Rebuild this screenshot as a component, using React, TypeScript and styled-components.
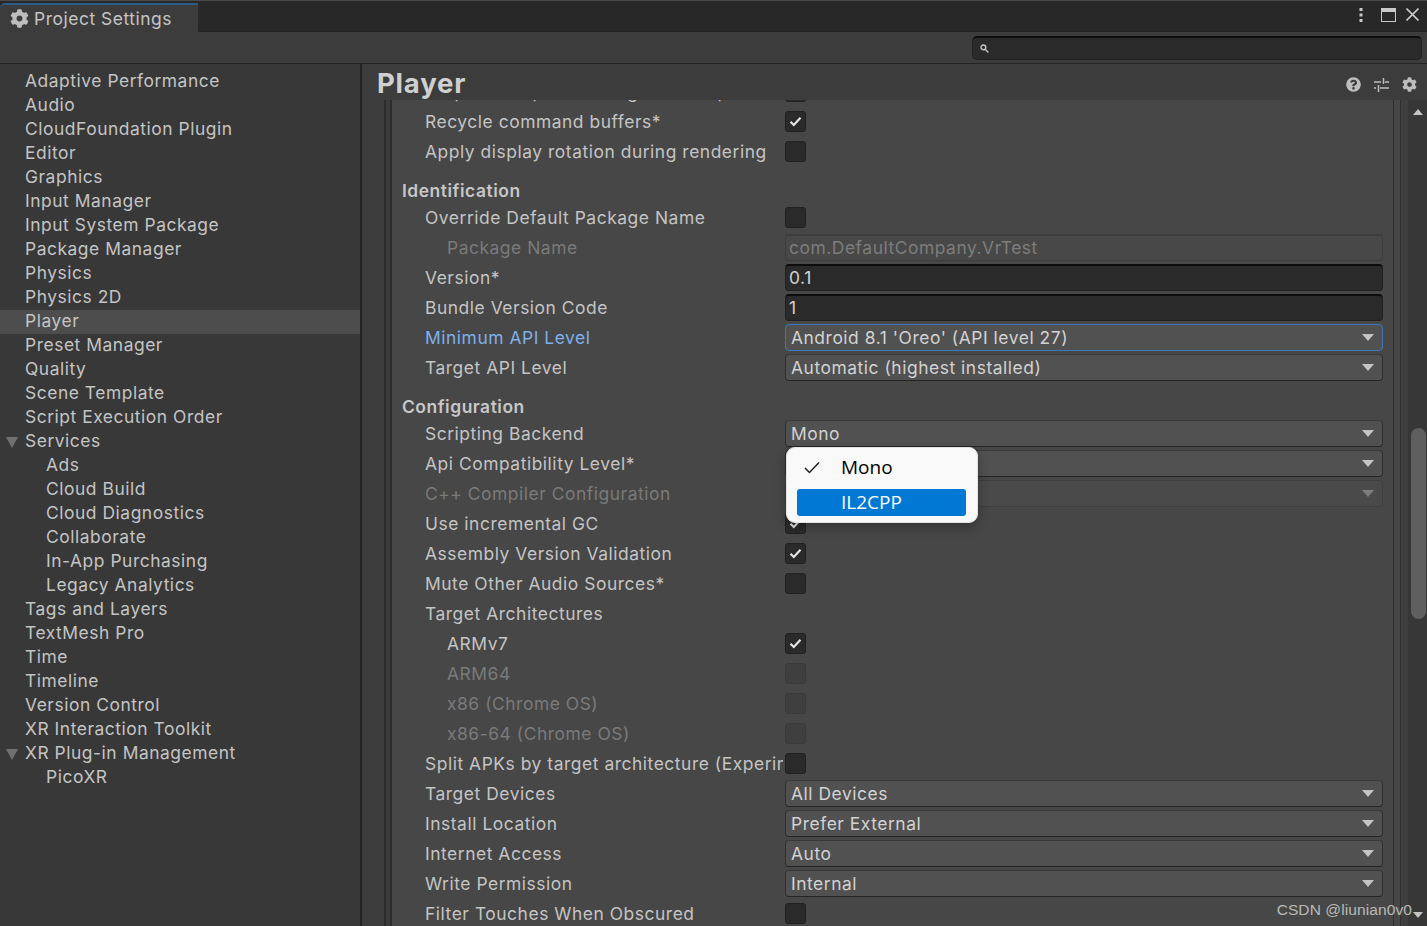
import React from "react";
import styled, { createGlobalStyle } from "styled-components";
import { FaCog, FaQuestionCircle } from "react-icons/fa";

const Global = createGlobalStyle`
  html, body { margin: 0; padding: 0; height: 100%; background: #3c3c3c; overflow: hidden; }
  #root { height: 100%; }
`;

const Window = styled.div`
  position: relative;
  width: 1427px;
  height: 926px;
  display: flex;
  flex-direction: column;
  overflow: hidden;
  background: #3c3c3c;
  color: #c4c4c4;
  font-family: Inter, "Noto Sans", sans-serif;
  font-size: 17.4px;
  letter-spacing: 0.55px;
`;

const TabBar = styled.div`
  height: 32px;
  flex: none;
  display: flex;
  align-items: stretch;
  justify-content: space-between;
  background: #282828;
  border-top: 1px solid #4a4a4a;
  box-sizing: border-box;
  border-bottom: 1px solid #232323;
`;

const Tab = styled.div`
  width: 198px;
  display: flex;
  align-items: center;
  gap: 5px;
  padding: 0 0 1px 10px;
  box-sizing: border-box;
  background: #3c3c3c;
  border-top: 2px solid #2c5d87;
  border-top-left-radius: 5px;
  margin-top: 2px;
  margin-bottom: -1px;
  color: #c4c4c4;
  svg { width: 19px; height: 19px; color: #bdbdbd; }
`;

const WindowControls = styled.div`
  display: flex;
  align-items: center;
  gap: 10px;
  padding: 0 8px 3px 0;
  color: #c8c8c8;
`;

const MaximizeIcon = styled.svg`
  margin-left: 8px;
`;

const SearchRow = styled.div`
  height: 32px;
  flex: none;
  box-sizing: border-box;
  display: flex;
  justify-content: flex-end;
  align-items: flex-start;
  padding: 4px 5px 0 0;
  border-bottom: 1px solid #232323;
`;

const SearchField = styled.div`
  width: 450px;
  height: 24px;
  box-sizing: border-box;
  display: flex;
  align-items: center;
  padding-left: 7px;
  background: #2a2a2a;
  border: 1px solid #212121;
  border-top: 2px solid #0d0d0d;
  border-radius: 5px;
`;

const Body = styled.div`
  flex: 1;
  min-height: 0;
  display: flex;
`;

const Sidebar = styled.nav`
  width: 360px;
  flex: none;
  padding-top: 6px;
  background: #383838;
  border-right: 2px solid #232323;
`;

const NavItem = styled.div<{ $active?: boolean; $level?: number }>`
  position: relative;
  height: 24px;
  line-height: 21px;
  padding-left: ${(p) => (p.$level ? 46 : 25)}px;
  background: ${(p) => (p.$active ? "#4d4d4d" : "transparent")};
  white-space: nowrap;
`;

const Caret = styled.span`
  position: absolute;
  left: 6px;
  top: 7px;
  width: 0;
  height: 0;
  border-left: 6px solid transparent;
  border-right: 6px solid transparent;
  border-top: 11px solid #707070;
`;

const Main = styled.main`
  flex: 1;
  min-width: 0;
  display: flex;
  flex-direction: column;
`;

const Header = styled.header`
  position: relative;
  z-index: 1;
  height: 36px;
  flex: none;
  display: flex;
  align-items: center;
  justify-content: space-between;
  padding: 0 10px 0 15px;
  background: #3c3c3c;
`;

const Title = styled.h1`
  margin: 1px 0 0;
  font-size: 27.5px;
  font-weight: 700;
  line-height: 36px;
  letter-spacing: 0.8px;
  color: #cfcfcf;
`;

const HeaderIcons = styled.div`
  display: flex;
  align-items: center;
  gap: 13px;
  padding-top: 5px;
  color: #bdbdbd;
  svg { width: 15px; height: 15px; display: block; }
`;

const Inspector = styled.div`
  flex: 1;
  min-height: 0;
  display: flex;
  overflow: hidden;
`;

const Gutter = styled.div`
  flex: none;
  box-sizing: border-box;
  margin-left: 22px;
  width: 8px;
  border-left: 2px solid #2c2c2c;
  border-right: 2px solid #2c2c2c;
  background: #3c3c3c;
`;

const Panel = styled.div`
  flex: 1;
  min-width: 0;
  background: #474747;
  overflow: hidden;
  padding-right: 6px;
  border-right: 1px solid #2f2f2f;
`;

const PanelScroll = styled.div`
  margin-top: -24px;
  padding: 0 10px;
  height: 900px;
  border-right: 1px solid #2f2f2f;
`;

const RightGutter = styled.div`
  width: 7px;
  flex: none;
  background: #3f3f3f;
`;

const Scrollbar = styled.div`
  position: relative;
  width: 19px;
  flex: none;
  background: #373737;
`;

const ScrollThumb = styled.div`
  position: absolute;
  left: 3px;
  top: 328px;
  width: 15px;
  height: 191px;
  border-radius: 8px;
  background: #5f5f5f;
`;

const ScrollArrow = styled.div<{ $down?: boolean }>`
  position: absolute;
  left: 5px;
  ${(p) => (p.$down ? "bottom: 8px;" : "top: 9px;")}
  width: 0;
  height: 0;
  border-left: 5px solid transparent;
  border-right: 5px solid transparent;
  ${(p) => (p.$down ? "border-top: 6px solid #c4c4c4;" : "border-bottom: 6px solid #c4c4c4;")}
`;

const Section = styled.div`
  height: 26px;
  line-height: 30px;
  margin-top: 10px;
  font-weight: 600;
  color: #c8c8c8;
`;

const Row = styled.div`
  height: 30px;
  display: flex;
  align-items: center;
`;

const Label = styled.div<{ $indent?: boolean; $blue?: boolean; $dim?: boolean }>`
  width: ${(p) => (p.$indent ? 336 : 358)}px;
  margin-left: ${(p) => (p.$indent ? 45 : 23)}px;
  margin-right: 2px;
  flex: none;
  overflow: hidden;
  white-space: nowrap;
  color: ${(p) => (p.$blue ? "#7eb0ea" : p.$dim ? "#7a7a7a" : "#c4c4c4")};
`;

const Check = styled.div<{ $dim?: boolean }>`
  width: 21px;
  height: 21px;
  box-sizing: border-box;
  display: flex;
  align-items: center;
  justify-content: center;
  border-radius: 3px;
  background: ${(p) => (p.$dim ? "#3f3f3f" : "#2a2a2a")};
  border: 1px solid ${(p) => (p.$dim ? "#3a3a3a" : "#212121")};
`;

const Input = styled.div<{ $dim?: boolean }>`
  flex: 1;
  height: 27px;
  line-height: 24px;
  box-sizing: border-box;
  padding-left: 3px;
  border-radius: 4px;
  white-space: nowrap;
  color: ${(p) => (p.$dim ? "#7d7d7d" : "#d2d2d2")};
  background: ${(p) => (p.$dim ? "#484848" : "#2a2a2a")};
  border: 1px solid ${(p) => (p.$dim ? "#3d3d3d" : "#212121")};
  border-top: 2px solid ${(p) => (p.$dim ? "#3d3d3d" : "#0d0d0d")};
`;

const Dropdown = styled.div<{ $focus?: boolean; $dim?: boolean }>`
  flex: 1;
  height: 27px;
  box-sizing: border-box;
  display: flex;
  align-items: center;
  justify-content: space-between;
  padding: 0 8px 0 5px;
  border-radius: 4px;
  white-space: nowrap;
  color: ${(p) => (p.$dim ? "#7d7d7d" : "#d2d2d2")};
  background: ${(p) => (p.$dim ? "#4a4a4a" : "#515151")};
  border: 1px solid ${(p) => (p.$focus ? "#3a79bb" : p.$dim ? "#3f3f3f" : "#303030")};
  ${(p) => (p.$focus || p.$dim ? "" : "border-bottom-color: #242424; border-top-color: #383838;")}
`;

const Arrow = styled.span<{ $dim?: boolean }>`
  width: 0;
  height: 0;
  border-left: 6px solid transparent;
  border-right: 6px solid transparent;
  border-top: 7px solid ${(p) => (p.$dim ? "#7d7d7d" : "#c4c4c4")};
`;

const Popup = styled.div`
  position: absolute;
  left: 786px;
  top: 447px;
  width: 192px;
  height: 76px;
  box-sizing: border-box;
  padding: 3px 11px 0 10px;
  background: #f9f9f9;
  border: 1px solid #e2e2e2;
  border-radius: 9px;
  box-shadow: 0 4px 12px rgba(0, 0, 0, 0.3);
  color: #000;
  font-family: "Open Sans", "Noto Sans", sans-serif;
  font-size: 19px;
  letter-spacing: 0;
  z-index: 3;
`;

const PopupItem = styled.div<{ $selected?: boolean }>`
  position: relative;
  height: ${(p) => (p.$selected ? 27 : 35)}px;
  margin-bottom: 3px;
  display: flex;
  align-items: center;
  padding: 0 0 ${(p) => (p.$selected ? 2 : 3)}px 44px;
  box-sizing: border-box;
  border-radius: 3px;
  background: ${(p) => (p.$selected ? "#0078d4" : "transparent")};
  color: ${(p) => (p.$selected ? "#fff" : "#000")};
`;

const PopupCheck = styled.svg`
  position: absolute;
  left: 7px;
  top: 10px;
`;

const Watermark = styled.div`
  position: absolute;
  right: 15px;
  bottom: 7px;
  z-index: 2;
  font-family: "Liberation Sans", Arial, sans-serif;
  font-size: 15.5px;
  letter-spacing: 0.1px;
  color: #b9b9b9;
`;

const CheckMark = () => (
  <svg width="13" height="11" viewBox="0 0 13 11" fill="none">
    <path d="M1.5 5.8 L4.8 9 L11.5 1.8" stroke="#e4e4e4" strokeWidth="2.2" />
  </svg>
);

const navItems: [string, number?, boolean?][] = [
  ["Adaptive Performance"], ["Audio"], ["CloudFoundation Plugin"], ["Editor"], ["Graphics"],
  ["Input Manager"], ["Input System Package"], ["Package Manager"], ["Physics"], ["Physics 2D"],
  ["Player"], ["Preset Manager"], ["Quality"], ["Scene Template"], ["Script Execution Order"],
  ["Services", 0, true], ["Ads", 1], ["Cloud Build", 1], ["Cloud Diagnostics", 1], ["Collaborate", 1],
  ["In-App Purchasing", 1], ["Legacy Analytics", 1], ["Tags and Layers"], ["TextMesh Pro"], ["Time"],
  ["Timeline"], ["Version Control"], ["XR Interaction Toolkit"], ["XR Plug-in Management", 0, true], ["PicoXR", 1],
];

type Opts = { indent?: boolean; blue?: boolean; dim?: boolean };
const CheckRow = ({ label, on, indent, blue, dim, dimBox }: Opts & { label: string; on?: boolean; dimBox?: boolean }) => (
  <Row>
    <Label $indent={indent} $blue={blue} $dim={dim}>{label}</Label>
    <Check $dim={dimBox}>{on && <CheckMark />}</Check>
  </Row>
);
const DropRow = ({ label, value, focus, blue, dim }: Opts & { label: string; value?: string; focus?: boolean }) => (
  <Row>
    <Label $blue={blue} $dim={dim}>{label}</Label>
    <Dropdown $focus={focus} $dim={dim}>
      <span>{value}</span>
      <Arrow $dim={dim} />
    </Dropdown>
  </Row>
);
const InputRow = ({ label, value, indent, dim }: Opts & { label: string; value: string }) => (
  <Row>
    <Label $indent={indent} $dim={dim}>{label}</Label>
    <Input $dim={dim}>{value}</Input>
  </Row>
);

export default function App() {
  return (
    <Window>
      <Global />
      <TabBar>
        <Tab><FaCog />Project Settings</Tab>
        <WindowControls>
          <svg width="4" height="14" viewBox="0 0 4 14" fill="#c8c8c8">
            <rect x="0.5" y="0" width="3" height="3" /><rect x="0.5" y="5.5" width="3" height="3" /><rect x="0.5" y="11" width="3" height="3" />
          </svg>
          <MaximizeIcon width="15" height="14" viewBox="0 0 15 14" fill="none" stroke="#c8c8c8">
            <rect x="0.5" y="0.5" width="14" height="13" /><rect x="1" y="1" width="13" height="3" fill="#c8c8c8" stroke="none" />
          </MaximizeIcon>
          <svg width="13" height="13" viewBox="0 0 13 13" stroke="#c8c8c8" strokeWidth="1.6">
            <path d="M0.5 0.5 L12.5 12.5 M12.5 0.5 L0.5 12.5" />
          </svg>
        </WindowControls>
      </TabBar>
      <SearchRow>
        <SearchField>
          <svg width="9" height="9" viewBox="0 0 9 9" fill="none" stroke="#c4c4c4" strokeWidth="1.4">
            <circle cx="3.4" cy="3.4" r="2.4" /><path d="M5.2 5.2 L8.4 8.4" />
          </svg>
        </SearchField>
      </SearchRow>
      <Body>
        <Sidebar>
          {navItems.map(([name, level, open]) => (
            <NavItem key={name} $level={level} $active={name === "Player"}>
              {open && <Caret />}
              {name}
            </NavItem>
          ))}
        </Sidebar>
        <Main>
          <Header>
            <Title>Player</Title>
            <HeaderIcons>
              <FaQuestionCircle />
              <svg viewBox="0 0 15 15" fill="none" stroke="#bdbdbd" strokeWidth="1.5">
                <path d="M0 5 H7 M11 5 H15 M9.5 1 V7 M0 11 H2 M6 11 H15 M4.5 8 V15" />
              </svg>
              <FaCog />
            </HeaderIcons>
          </Header>
          <Inspector>
            <Gutter />
            <Panel>
              <PanelScroll>
                <CheckRow label="Acquire swapchain image late as possible*" />
                <CheckRow label="Recycle command buffers*" on />
                <CheckRow label="Apply display rotation during rendering" />
                <Section>Identification</Section>
                <CheckRow label="Override Default Package Name" />
                <InputRow label="Package Name" value="com.DefaultCompany.VrTest" indent dim />
                <InputRow label="Version*" value="0.1" />
                <InputRow label="Bundle Version Code" value="1" />
                <DropRow label="Minimum API Level" value="Android 8.1 'Oreo' (API level 27)" focus blue />
                <DropRow label="Target API Level" value="Automatic (highest installed)" />
                <Section>Configuration</Section>
                <DropRow label="Scripting Backend" value="Mono" />
                <DropRow label="Api Compatibility Level*" />
                <DropRow label="C++ Compiler Configuration" dim />
                <CheckRow label="Use incremental GC" on />
                <CheckRow label="Assembly Version Validation" on />
                <CheckRow label="Mute Other Audio Sources*" />
                <Row><Label>Target Architectures</Label></Row>
                <CheckRow label="ARMv7" on indent />
                <CheckRow label="ARM64" indent dim dimBox />
                <CheckRow label="x86 (Chrome OS)" indent dim dimBox />
                <CheckRow label="x86-64 (Chrome OS)" indent dim dimBox />
                <CheckRow label="Split APKs by target architecture (Experimental)" />
                <DropRow label="Target Devices" value="All Devices" />
                <DropRow label="Install Location" value="Prefer External" />
                <DropRow label="Internet Access" value="Auto" />
                <DropRow label="Write Permission" value="Internal" />
                <CheckRow label="Filter Touches When Obscured" />
              </PanelScroll>
            </Panel>
            <RightGutter />
            <Scrollbar>
              <ScrollArrow />
              <ScrollThumb />
              <ScrollArrow $down />
            </Scrollbar>
          </Inspector>
        </Main>
      </Body>
      <Popup>
        <PopupItem>
          <PopupCheck width="16" height="13" viewBox="0 0 16 13" fill="none">
            <path d="M1 7 L5.5 11.5 L15 1.5" stroke="#222" strokeWidth="1.5" />
          </PopupCheck>
          Mono
        </PopupItem>
        <PopupItem $selected>IL2CPP</PopupItem>
      </Popup>
      <Watermark>CSDN @liunian0v0</Watermark>
    </Window>
  );
}
